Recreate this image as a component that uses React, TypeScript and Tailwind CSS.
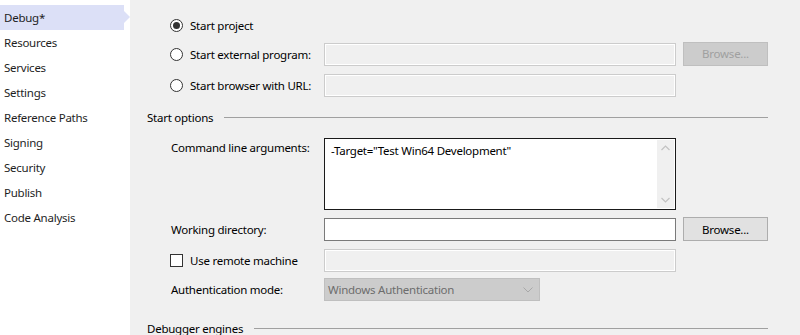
const font = { fontFamily: '"Noto Sans", "Liberation Sans", sans-serif' };

const pages = [
  "Debug*",
  "Resources",
  "Services",
  "Settings",
  "Reference Paths",
  "Signing",
  "Security",
  "Publish",
  "Code Analysis",
];

export default function App() {
  return (
    <div
      className="flex w-[800px] h-[335px] overflow-hidden text-[11.5px] tracking-[-0.25px] text-black"
      style={font}
    >
      <Sidebar />
      <div className="flex-1 bg-[#f0f0f0] pr-[32px]">
        <div className="pl-[40px]">
          <div className="mt-[13px] h-[24px] flex items-center">
            <Radio checked label="Start project" />
          </div>
          <div className="mt-[5px] h-[24px] flex items-center">
            <div className="w-[154px]">
              <Radio label="Start external program:" />
            </div>
            <DisabledInput width="w-[352px]" />
            <button className="ml-[7px] w-[85px] h-[24px] border border-[#bfbfbf] bg-[#cccccc] text-[#a0a0a0]">
              Browse...
            </button>
          </div>
          <div className="mt-[7px] h-[24px] flex items-center">
            <div className="w-[154px]">
              <Radio label="Start browser with URL:" />
            </div>
            <DisabledInput width="w-[352px]" />
          </div>
        </div>

        <Section title="Start options" className="mt-[10px]" />

        <div className="pl-[40px]">
          <div className="mt-[11px] flex">
            <div className="w-[154px] pt-[1px] pl-[1px]">Command line arguments:</div>
            <div className="relative w-[352px] h-[72px] border border-[#1a1a1a] bg-white">
              <div className="pl-[6px] pt-[3px]">
                -Target="Test Win64 Development"
              </div>
              <div className="absolute right-[1px] top-[1px] bottom-[1px] w-[17px] bg-[#f0f0f0] flex flex-col items-center justify-between py-[5px]">
                <svg width="9" height="6" viewBox="0 0 9 6">
                  <path d="M0.5 5 L4.5 1 L8.5 5" fill="none" stroke="#c2c2c2" strokeWidth="1.2" />
                </svg>
                <svg width="9" height="6" viewBox="0 0 9 6">
                  <path d="M0.5 1 L4.5 5 L8.5 1" fill="none" stroke="#c2c2c2" strokeWidth="1.2" />
                </svg>
              </div>
            </div>
          </div>

          <div className="mt-[7px] h-[24px] flex items-center">
            <div className="w-[154px] pl-[1px] pt-[1px]">Working directory:</div>
            <div className="w-[352px] h-[23px] border border-[#7a7a7a] bg-white" />
            <button className="ml-[7px] w-[85px] h-[24px] border border-[#adadad] bg-[#e1e1e1] pt-[1px]">
              Browse...
            </button>
          </div>

          <div className="mt-[8px] h-[23px] flex items-center">
            <div className="w-[154px] flex items-center">
              <div className="w-[13px] h-[13px] border border-[#333333] bg-white" />
              <span className="ml-[7px] pt-[1px]">Use remote machine</span>
            </div>
            <DisabledInput width="w-[352px]" />
          </div>

          <div className="mt-[6px] h-[23px] flex items-center">
            <div className="w-[154px] pl-[1px] pt-[1px]">Authentication mode:</div>
            <div className="w-[216px] h-[23px] border border-[#bfbfbf] bg-[#cccccc] text-[#6d6d6d] flex items-center justify-between pl-[3px] pr-[6px]">
              <span className="pt-[1px]">Windows Authentication</span>
              <svg width="10" height="6" viewBox="0 0 10 6">
                <path d="M0.5 0.5 L5 5 L9.5 0.5" fill="none" stroke="#a8a8a8" strokeWidth="1" />
              </svg>
            </div>
          </div>
        </div>

        <Section title="Debugger engines" className="mt-[17px]" />
      </div>
    </div>
  );
}

function Sidebar() {
  return (
    <div className="w-[130px] bg-white pt-[5px] shrink-0">
      {pages.map((p, i) =>
        i === 0 ? (
          <div key={p} className="relative h-[25px] w-[124px] bg-[#dce0f7] flex items-center pl-[4px] pt-[1px] text-[#1e1e1e]">
            {p}
            <div className="absolute left-[124px] top-[6px] w-0 h-0 border-y-[6px] border-y-transparent border-l-[6px] border-l-[#dce0f7]" />
          </div>
        ) : (
          <div key={p} className="h-[25px] flex items-center pl-[4px] pt-[1px] text-[#1e1e1e]">
            {p}
          </div>
        )
      )}
    </div>
  );
}

function Radio({ label, checked }: { label: string; checked?: boolean }) {
  return (
    <div className="flex items-center">
      <div className="w-[13px] h-[13px] rounded-full border border-[#333333] bg-white flex items-center justify-center">
        {checked && <div className="w-[7px] h-[7px] rounded-full bg-[#333333]" />}
      </div>
      <span className="ml-[7px] pt-[1px]">{label}</span>
    </div>
  );
}

function DisabledInput({ width }: { width: string }) {
  return (
    <div className={`${width} h-[23px] border border-[#cccccc] bg-[#f0f0f0] shadow-[inset_0_0_0_1px_#ffffff]`} />
  );
}

function Section({ title, className }: { title: string; className?: string }) {
  return (
    <div className={`h-[20px] flex items-center pl-[17px] ${className ?? ""}`}>
      <span className="pt-[1px]">{title}</span>
      <div className="flex-1 ml-[11px] h-px bg-[#a0a0a0]" />
    </div>
  );
}
